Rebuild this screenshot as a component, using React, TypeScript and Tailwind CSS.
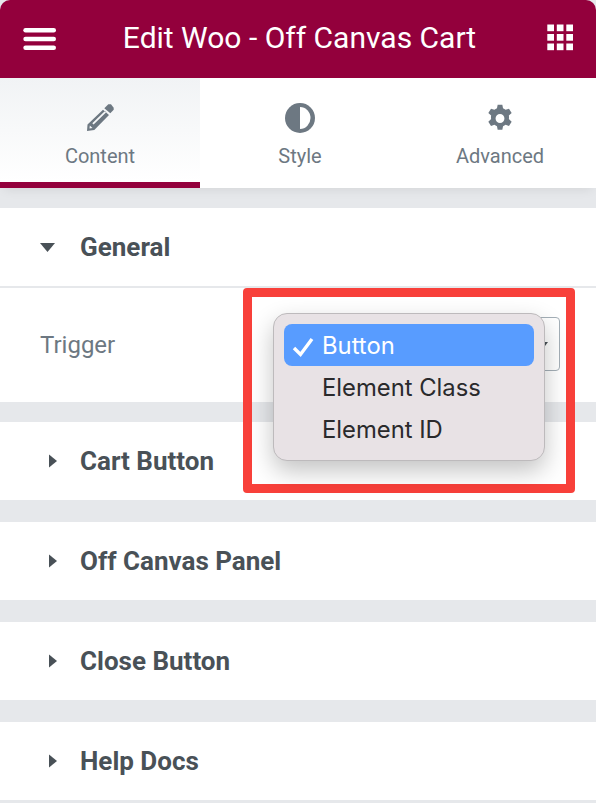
import React from "react";

function Section({ label }: { label: string }) {
  return (
    <div className="h-[78px] bg-white flex items-center shrink-0">
      <div className="w-[80px] flex items-center pl-[49px] shrink-0">
        <svg width="8" height="14" viewBox="0 0 8 14"><path d="M0 0.5 L8 7 L0 13.5 Z" fill="#495157" /></svg>
      </div>
      <span className="text-[26px] leading-none font-bold text-[#495157]">{label}</span>
    </div>
  );
}

function Tab({ label, active, children }: { label: string; active?: boolean; children: React.ReactNode }) {
  return (
    <div className={`w-[200px] shrink-0 h-[110px] flex flex-col items-center ${active ? "bg-gradient-to-b from-[#f1f3f5] to-white border-b-[6px] border-[#93003c]" : "bg-white"}`}>
      <div className="h-[30px] mt-[25px] flex items-center justify-center">{children}</div>
      <span className="mt-[9px] text-[20px] leading-[28px] text-[#6d7882]">{label}</span>
    </div>
  );
}

export default function App() {
  return (
    <div className="relative w-[596px] h-[803px] overflow-hidden bg-[#e6e8eb] font-['Roboto',sans-serif]">
      <header className="h-[78px] bg-[#93003c] rounded-t-[10px] flex items-center justify-between pl-[23px] pr-[23px]">
        <svg width="33" height="24" viewBox="0 0 33 24" fill="#fff" className="mt-[0px]">
          <rect x="0.3" y="1" width="32.7" height="4.5" rx="2.25" />
          <rect x="0.3" y="9.8" width="32.7" height="4.5" rx="2.25" />
          <rect x="0.3" y="18.6" width="32.7" height="4.5" rx="2.25" />
        </svg>
        <h1 className="text-[30px] leading-none font-normal text-white mt-[-2px] ml-[-1px] mr-[3px]">Edit Woo - Off Canvas Cart</h1>
        <svg width="26" height="27" viewBox="0 0 26 27" fill="#fff" className="mt-[-3px]">
          {[0.5, 10, 19.5].map((y) =>
            [0.3, 9.8, 19.3].map((x) => <rect key={`${x}-${y}`} x={x} y={y} width="6.7" height="6.7" />)
          )}
        </svg>
      </header>

      <nav className="flex bg-white h-[110px] relative z-10 shadow-[0_6px_10px_-4px_rgba(0,0,0,0.08)]">
        <Tab label="Content" active>
          <svg width="27" height="28" viewBox="0 0 27 28" fill="#6d7882">
            <path d="M17.3 4.3 L21.3 0.3 H24 L26.7 3.7 V5.7 L23.3 9.3 Z" />
            <path fillRule="evenodd" d="M16 5.7 L22 11 L7.3 26 L0 27 L0.5 20.5 Z M18 7 L5.3 19.3 L6.6 20.5 L19.2 8.2 Z M2.8 21.5 L2.5 24.5 L5.5 24 Z" />
          </svg>
        </Tab>
        <Tab label="Style">
          <svg width="30" height="30" viewBox="0 0 30 30">
            <circle cx="15" cy="15" r="15" fill="#6d7882" />
            <path d="M15 4 A10.5 11 0 0 1 15 26 Z" fill="#fff" />
          </svg>
        </Tab>
        <Tab label="Advanced">
          <svg width="28" height="29" viewBox="0 0 24 24" fill="#6d7882">
            <path fillRule="evenodd" d="M10 0.3 h4 l0.6 3 a8.5 8.5 0 0 1 2.2 1.3 l2.9-1 2.3 3.7 -2.4 2.2 a8.5 8.5 0 0 1 0 3 l2.4 2.2 -2.3 3.7 -2.9-1 a8.5 8.5 0 0 1 -2.2 1.3 l-0.6 3 h-4 l-0.6-3 a8.5 8.5 0 0 1 -2.2-1.3 l-2.9 1 -2.3-3.7 2.4-2.2 a8.5 8.5 0 0 1 0-3 l-2.4-2.2 2.3-3.7 2.9 1 a8.5 8.5 0 0 1 2.2-1.3 Z M12 8.2 a3.8 3.8 0 1 0 0 7.6 a3.8 3.8 0 1 0 0-7.6 Z" />
          </svg>
        </Tab>
      </nav>

      <main className="pt-[20px] flex flex-col">
        <div className="h-[78px] bg-white flex items-center border-b-2 border-[#e6e8eb] box-content">
          <div className="w-[80px] pl-[40px] shrink-0">
            <svg width="15" height="9" viewBox="0 0 15 9"><path d="M0 0 H15 L7.5 9 Z" fill="#495157" /></svg>
          </div>
          <span className="text-[26px] leading-none font-bold text-[#495157]">General</span>
        </div>
        <div className="h-[114px] bg-white flex items-center justify-between pl-[40px] pr-[36px]">
          <span className="text-[24px] leading-none text-[#6d7882]">Trigger</span>
          <div className="w-[120px] h-[54px] mt-[-2px] border border-[#a4afb7] rounded-[4px] flex items-center justify-end pr-[11px]">
            <svg width="6" height="4" viewBox="0 0 6 4"><path d="M0 0 H6 L3 4 Z" fill="#495157" /></svg>
          </div>
        </div>
        <div className="flex flex-col gap-[22px] mt-[20px]">
          <Section label="Cart Button" />
          <Section label="Off Canvas Panel" />
          <Section label="Close Button" />
          <Section label="Help Docs" />
        </div>
      </main>

      <div className="absolute left-[243px] top-[288px] w-[332px] h-[205px] border-[9px] border-[#f8403a] rounded-[4px] z-10" />

      <div className="absolute left-[273px] top-[313px] w-[272px] h-[148px] z-20 rounded-[14px] bg-[#e8e2e5] border border-[#bdbabc] shadow-[0_10px_24px_rgba(0,0,0,0.24)] p-[10px] font-['Inter',sans-serif] text-[23.8px] text-[#2a2a2c]">
        <div className="h-[42px] rounded-[8px] bg-[#589cff] text-white flex items-center">
          <svg width="24" height="22" viewBox="0 0 24 22" className="ml-[8px] mr-[6px] shrink-0 mt-[3px]">
            <path d="M2 12 L8.5 18.5 L20 3" fill="none" stroke="#fff" strokeWidth="3.4" />
          </svg>
          <span className="leading-none mt-[2px]">Button</span>
        </div>
        <div className="h-[42px] pl-[38px] flex items-center leading-none pt-[2px]">Element Class</div>
        <div className="h-[42px] pl-[38px] flex items-center leading-none pt-[2px]">Element ID</div>
      </div>
    </div>
  );
}
